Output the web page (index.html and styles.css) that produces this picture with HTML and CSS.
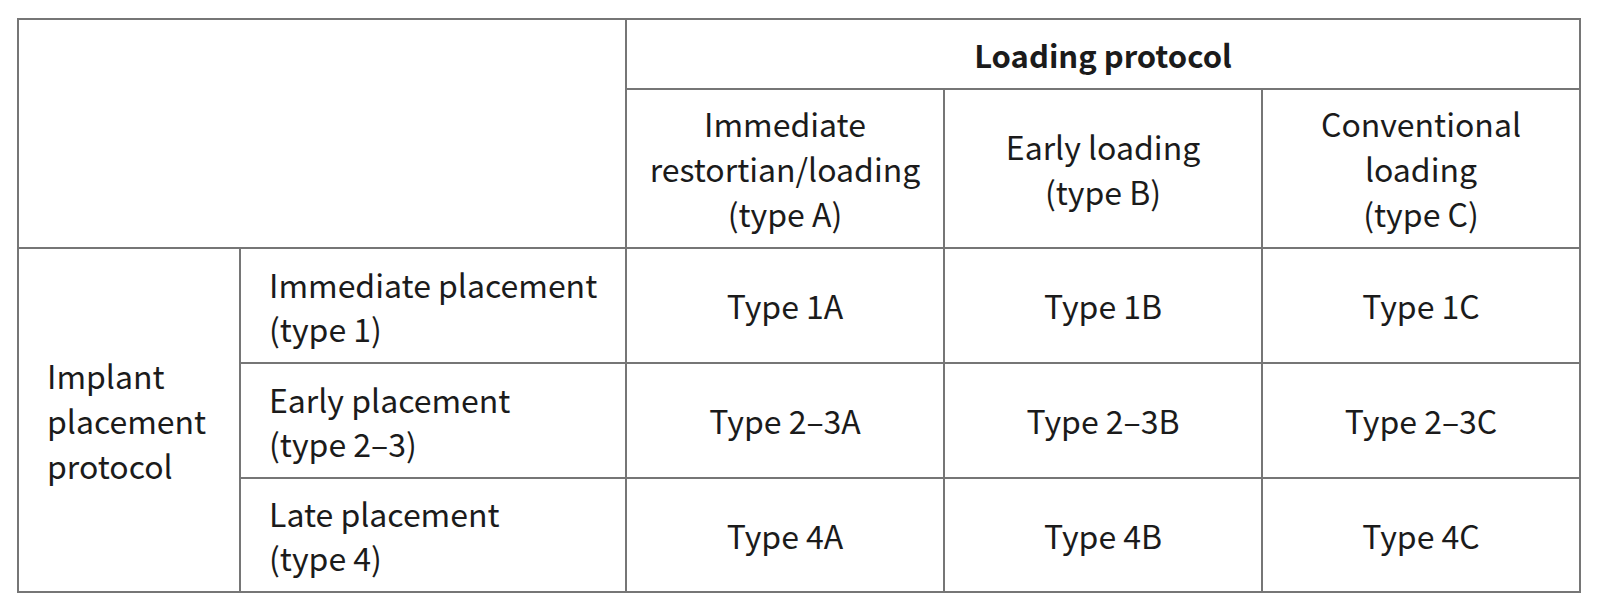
FILE: index.html
```html
<!DOCTYPE html>
<html lang="en">
<head>
<meta charset="utf-8">
<title>Implant placement and loading protocols</title>
<link rel="stylesheet" href="styles.css">
</head>
<body>
<table class="protocols">
  <colgroup>
    <col class="c-group">
    <col class="c-label">
    <col class="c-type">
    <col class="c-type">
    <col class="c-type">
  </colgroup>
  <thead>
    <tr class="r-top">
      <th class="blank" colspan="2" rowspan="2"></th>
      <th class="main-head" colspan="3">Loading protocol</th>
    </tr>
    <tr class="r-sub">
      <th class="sub-head">Immediate<br>restortian/loading<br>(type A)</th>
      <th class="sub-head">Early loading<br>(type B)</th>
      <th class="sub-head">Conventional<br>loading<br>(type C)</th>
    </tr>
  </thead>
  <tbody>
    <tr class="r-body">
      <td class="group" rowspan="3">Implant<br>placement<br>protocol</td>
      <td class="label">Immediate placement<br>(type 1)</td>
      <td class="cell">Type 1A</td>
      <td class="cell">Type 1B</td>
      <td class="cell">Type 1C</td>
    </tr>
    <tr class="r-body">
      <td class="label">Early placement<br>(type 2–3)</td>
      <td class="cell">Type 2–3A</td>
      <td class="cell">Type 2–3B</td>
      <td class="cell">Type 2–3C</td>
    </tr>
    <tr class="r-body r-last">
      <td class="label">Late placement<br>(type 4)</td>
      <td class="cell">Type 4A</td>
      <td class="cell">Type 4B</td>
      <td class="cell">Type 4C</td>
    </tr>
  </tbody>
</table>
</body>
</html>
```
FILE: styles.css
```css
html, body {
  margin: 0;
  padding: 0;
  background: #ffffff;
}

body {
  padding: 18px 0 0 17px;
  font-family: "Noto Sans CJK SC", "Noto Sans", sans-serif;
  color: #1b1b1b;
}

.protocols {
  border-collapse: collapse;
  table-layout: fixed;
  width: 1564px;
  font-size: 32px;
  line-height: 45px;
}

.c-group { width: 222px; }
.c-label { width: 386px; }
.c-type { width: 318px; }

.protocols th,
.protocols td {
  border: 2px solid #767676;
  padding: 0 0 0 28px;
  vertical-align: middle;
  font-weight: 400;
}

.r-top { height: 70px; }
.r-sub { height: 159px; }
.r-body { height: 115px; }
.r-last { height: 114px; }

.main-head {
  font-weight: 700 !important;
  font-size: 31px;
  text-align: center;
  padding: 0 !important;
}

.sub-head {
  text-align: center;
  padding: 0 !important;
}

.group,
.label {
  text-align: left;
}

.label {
  line-height: 44px;
}

.cell {
  text-align: center;
  padding: 0 !important;
}
```
